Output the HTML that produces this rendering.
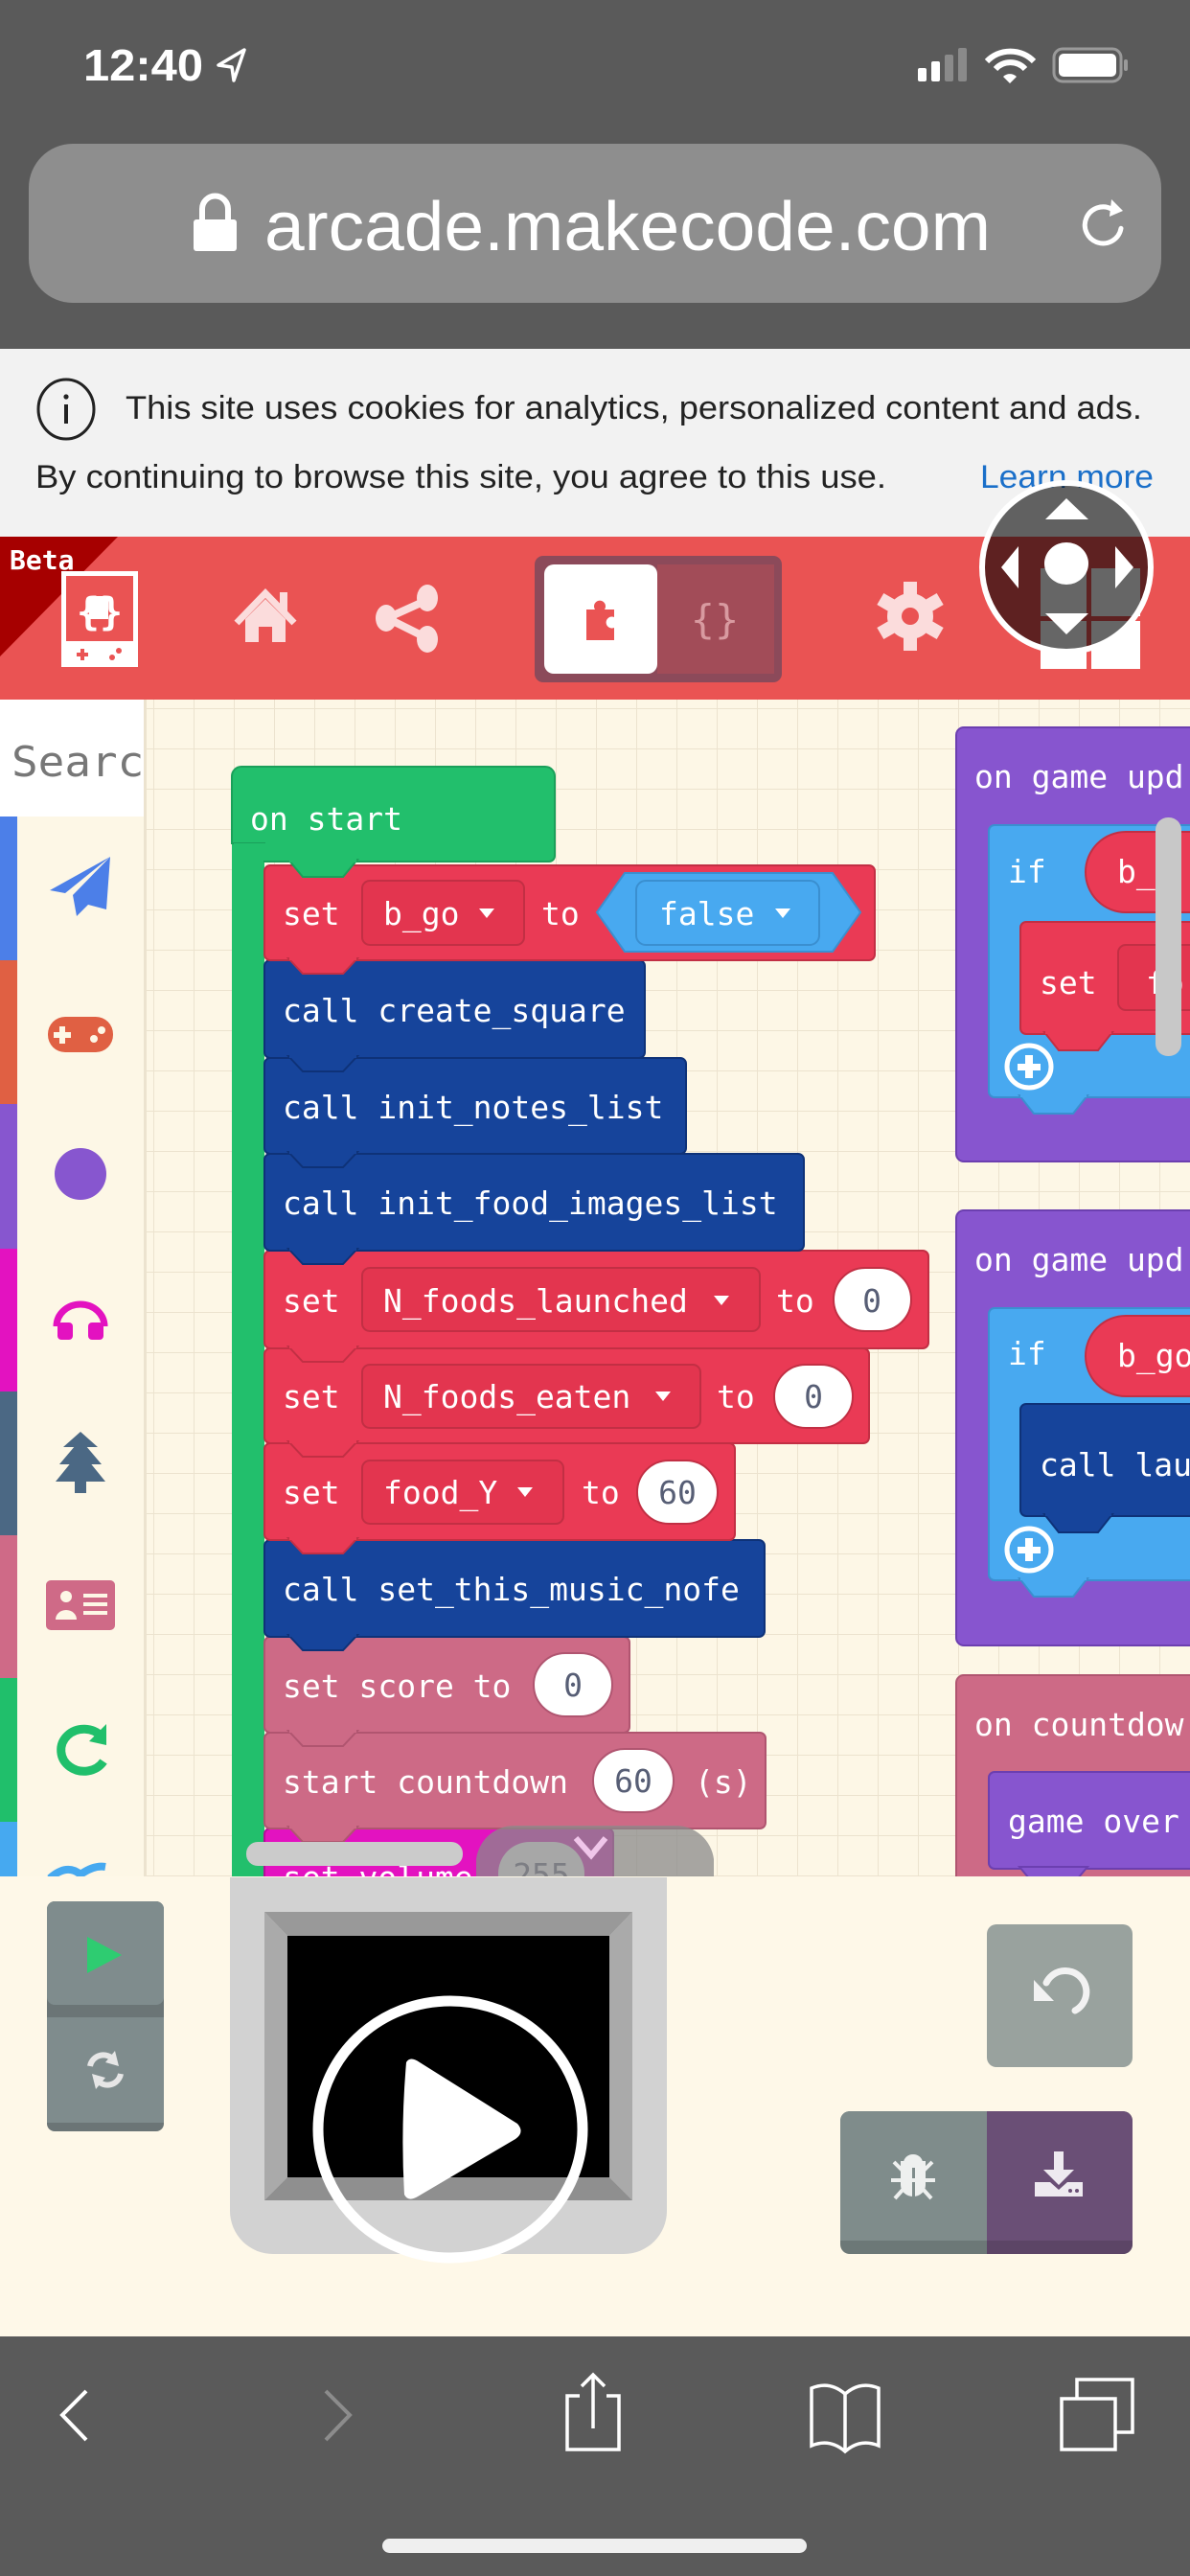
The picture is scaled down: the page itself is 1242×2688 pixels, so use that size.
<!DOCTYPE html>
<html><head><meta charset="utf-8"><style>
html,body{margin:0;padding:0;background:#5a5a5a}
svg{display:block}
.m{font-family:"DejaVu Sans Mono","Liberation Mono",monospace;font-size:33px;fill:#fff}
.s{font-family:"Liberation Sans",sans-serif}
</style></head><body>
<svg width="1242" height="2688" viewBox="0 0 1242 2688" xmlns="http://www.w3.org/2000/svg">
<defs>
<pattern id="g" x="34" y="25" width="42" height="42" patternUnits="userSpaceOnUse">
<rect width="42" height="42" fill="#fdf7e6"/>
<path d="M0 0V42M0 0H42" stroke="#ece3cf" stroke-width="2"/>
</pattern>
<clipPath id="ws"><rect x="0" y="730" width="1242" height="1228"/></clipPath>
<clipPath id="sc"><rect x="0" y="730" width="150" height="122"/></clipPath>
</defs>

<rect x="0" y="0" width="1242" height="364" fill="#5a5a5a"/>
<text x="87" y="84" class="s" font-size="46" font-weight="bold" fill="#fff" textLength="125" lengthAdjust="spacingAndGlyphs">12:40</text>
<path d="M255 52 L228 68 L242 70 L244 84 Z" fill="none" stroke="#fff" stroke-width="3.5" stroke-linejoin="round"/>
<rect x="958" y="71" width="9" height="14" rx="2" fill="#fff"/>
<rect x="972" y="64" width="9" height="21" rx="2" fill="#fff"/>
<rect x="986" y="57" width="9" height="28" rx="2" fill="#8a8a8a"/>
<rect x="1000" y="50" width="9" height="35" rx="2" fill="#8a8a8a"/>
<path d="M1030 64 A34 34 0 0 1 1079 64" fill="none" stroke="#fff" stroke-width="6"/>
<path d="M1039 72 A21 21 0 0 1 1070 72" fill="none" stroke="#fff" stroke-width="6"/>
<path d="M1047 80 L1054 87 L1061 80 A10 10 0 0 0 1047 80Z" fill="#fff"/>
<rect x="1100" y="51" width="70" height="34" rx="9" fill="none" stroke="#9a9a9a" stroke-width="3"/>
<rect x="1105" y="56" width="60" height="24" rx="5" fill="#fff"/>
<rect x="1173" y="62" width="4" height="12" rx="2" fill="#9a9a9a"/>
<rect x="30" y="150" width="1182" height="166" rx="46" fill="#8e8e8e"/>
<rect x="202" y="229" width="45" height="33" rx="3" fill="#fff"/>
<path d="M211 230 V218 a13.5 13.5 0 0 1 27 0 V230" fill="none" stroke="#fff" stroke-width="6"/>
<text x="276" y="261" class="s" font-size="72" fill="#fff" textLength="758" lengthAdjust="spacingAndGlyphs">arcade.makecode.com</text>
<path d="M1166 223 A19 19 0 1 0 1168 245" fill="none" stroke="#fff" stroke-width="5" stroke-linecap="round" transform="rotate(-20 1150 236)"/>
<path d="M1160 208 L1172 220 L1158 226 Z" fill="#fff"/>

<rect x="0" y="364" width="1242" height="196" fill="#f2f2f2"/>
<ellipse cx="69" cy="427" rx="29" ry="31" fill="none" stroke="#222" stroke-width="3"/>
<rect x="67" y="422" width="4" height="20" fill="#222"/>
<circle cx="69" cy="414" r="2.6" fill="#222"/>
<text x="131" y="437" class="s" font-size="34" fill="#222" textLength="1061" lengthAdjust="spacingAndGlyphs">This site uses cookies for analytics, personalized content and ads.</text>
<text x="37" y="509" class="s" font-size="34" fill="#222" textLength="888" lengthAdjust="spacingAndGlyphs">By continuing to browse this site, you agree to this use.</text>
<text x="1023" y="509" class="s" font-size="34" fill="#1a6fc9" textLength="181" lengthAdjust="spacingAndGlyphs">Learn more</text>

<rect x="0" y="560" width="1242" height="170" fill="#ea5353"/>
<polygon points="0,560 123,560 0,685" fill="#a60000"/>
<text x="10" y="594" font-family="DejaVu Sans Mono,monospace" font-size="28" fill="#fff" font-weight="bold">Beta</text>
<rect x="64" y="596" width="80" height="100" fill="#fff"/>
<rect x="69" y="601" width="70" height="68" fill="#ea5353"/>
<text x="104" y="652" text-anchor="middle" font-family="DejaVu Sans Mono,monospace" font-size="40" fill="#fff" font-weight="bold">{}</text>
<rect x="93" y="622" width="20" height="24" fill="#fff"/>
<rect x="80" y="681" width="12" height="4" fill="#ea5353"/><rect x="84" y="677" width="4" height="12" fill="#ea5353"/>
<circle cx="117" cy="686" r="3" fill="#ea5353"/><circle cx="124" cy="679" r="3" fill="#ea5353"/>
<path d="M247 650 L277 619 L307 650" fill="none" stroke="#fbdcdc" stroke-width="7"/>
<rect x="292" y="618" width="8" height="20" fill="#fbdcdc"/>
<path d="M256 646 L277 625 L298 646 V670 H284 V654 H270 V670 H256 Z" fill="#fbdcdc"/>
<path d="M446 626 L404 645 L446 666" fill="none" stroke="#fbdcdc" stroke-width="8"/>
<ellipse cx="446" cy="624" rx="11" ry="14" fill="#fbdcdc"/>
<ellipse cx="403" cy="645" rx="11" ry="14" fill="#fbdcdc"/>
<ellipse cx="446" cy="667" rx="11" ry="14" fill="#fbdcdc"/>
<rect x="558" y="580" width="258" height="132" rx="9" fill="#8c4a5a"/>
<rect x="686" y="589" width="122" height="114" fill="#a24c58"/>
<rect x="568" y="589" width="118" height="114" rx="10" fill="#fff"/>
<path d="M612 636 H621 a6 6 0 1 1 10 0 H641 V644 a6 6 0 1 0 0 11 V668 H612 Z" fill="#ea5353"/>
<text x="746" y="661" text-anchor="middle" font-family="DejaVu Sans Mono,monospace" font-size="42" fill="#d89aa0">{}</text>
<g transform="translate(950 643)" fill="#fbdcdc">
<circle r="24"/>
<rect x="-7" y="-36" width="14" height="72"/>
<rect x="-7" y="-36" width="14" height="72" transform="rotate(60)"/>
<rect x="-7" y="-36" width="14" height="72" transform="rotate(120)"/>
<circle r="9" fill="#ea5353"/>
</g>
<rect x="1086" y="593" width="48" height="50" fill="#fff"/>
<rect x="1139" y="593" width="51" height="50" fill="#fff"/>
<rect x="1086" y="648" width="48" height="50" fill="#fff"/>
<rect x="1139" y="648" width="51" height="50" fill="#fff"/>
<circle cx="1113" cy="592" r="88" fill="#000" fill-opacity="0.6" stroke="#fff" stroke-width="6"/>
<ellipse cx="1113" cy="588" rx="23" ry="22" fill="#fff"/>
<polygon points="1063,570 1045,592 1063,614" fill="#fff"/>
<polygon points="1164,570 1183,592 1164,614" fill="#fff"/>
<polygon points="1091,640 1136,640 1113,662" fill="#fff"/>
<polygon points="1091,542 1136,542 1113,520" fill="#fff"/>

<g clip-path="url(#ws)">
<rect x="0" y="730" width="1242" height="1228" fill="url(#g)"/>
<rect x="0" y="730" width="150" height="1228" fill="#fdf7e6"/>
<rect x="150" y="730" width="3" height="1228" fill="#ece3cf"/>
<rect x="0" y="730" width="150" height="122" fill="#fff"/>
<text x="12" y="810" font-family="DejaVu Sans Mono,monospace" font-size="44" fill="#777" clip-path="url(#sc)" textLength="166" lengthAdjust="spacingAndGlyphs">Search</text>
<rect x="0" y="852" width="18" height="150" fill="#4c7fe8"/>
<rect x="0" y="1002" width="18" height="150" fill="#e06043"/>
<rect x="0" y="1152" width="18" height="151" fill="#8756cf"/>
<rect x="0" y="1303" width="18" height="149" fill="#e312c0"/>
<rect x="0" y="1452" width="18" height="150" fill="#4b6884"/>
<rect x="0" y="1602" width="18" height="149" fill="#cf6a87"/>
<rect x="0" y="1751" width="18" height="150" fill="#20bf6b"/>
<rect x="0" y="1901" width="18" height="60" fill="#46a9f0"/>
<polygon points="115,894 52,929 68,932" fill="#4c7fe8"/>
<polygon points="115,894 76,934 80,956 92,944 111,949" fill="#4c7fe8"/>
<rect x="50" y="1061" width="68" height="37" rx="18" fill="#e06043"/>
<rect x="56" y="1077" width="18" height="6" fill="#fdf7e6"/><rect x="62" y="1071" width="6" height="18" fill="#fdf7e6"/>
<circle cx="98" cy="1084" r="4" fill="#fdf7e6"/><circle cx="106" cy="1075" r="4" fill="#fdf7e6"/>
<ellipse cx="84" cy="1225" rx="27" ry="27" fill="#8756cf"/>
<path d="M59 1384 A25 23 0 0 1 109 1384" fill="none" stroke="#e312c0" stroke-width="7"/>
<rect x="60" y="1380" width="16" height="18" rx="4" fill="#e312c0"/><rect x="92" y="1380" width="16" height="18" rx="4" fill="#e312c0"/>
<polygon points="84,1494 66,1510 102,1510" fill="#4b6884"/>
<polygon points="84,1502 62,1528 106,1528" fill="#4b6884"/>
<polygon points="84,1514 58,1546 110,1546" fill="#4b6884"/>
<rect x="78" y="1544" width="12" height="14" fill="#4b6884"/>
<rect x="48" y="1649" width="72" height="52" rx="5" fill="#cf6a87"/>
<circle cx="69" cy="1666" r="6" fill="#fdf7e6"/><path d="M58 1690 a11 10 0 0 1 22 0Z" fill="#fdf7e6"/>
<rect x="87" y="1663" width="25" height="4" fill="#fdf7e6"/><rect x="87" y="1672" width="25" height="4" fill="#fdf7e6"/><rect x="87" y="1681" width="25" height="4" fill="#fdf7e6"/>
<path d="M106 1812 A24 22 0 1 0 108 1838" fill="none" stroke="#20bf6b" stroke-width="9"/>
<polygon points="93,1817 111,1799 111,1821" fill="#20bf6b"/>
<path d="M52 1960 Q70 1944 84 1956 Q98 1946 110 1948" fill="none" stroke="#46a9f0" stroke-width="8"/>

<rect x="242" y="880" width="34" height="1100" fill="#22bf6c"/>

<rect x="276" y="1908" width="364" height="100" rx="6" fill="#e312c0" stroke="#b30e99" stroke-width="2"/>
<text x="295" y="1971" class="m">set volume</text>
<rect x="520" y="1922" width="90" height="66" rx="33" fill="#fff"/>
<text x="565" y="1968" class="m" style="fill:#575e75" text-anchor="middle">255</text>
<rect x="276" y="1808" width="523" height="100" rx="6" fill="#cd6a86" stroke="#b05570" stroke-width="2"/>
<polygon points="301,1906 316,1922 358,1922 373,1906" fill="#cd6a86" stroke="#b05570" stroke-width="2"/>
<rect x="302" y="1902" width="70" height="6" fill="#cd6a86"/>
<text x="295" y="1871" class="m">start countdown</text>
<rect x="619" y="1825" width="84" height="66" rx="33" fill="#fff" stroke="#b05570" stroke-width="2"/>
<text x="661" y="1870" class="m" style="fill:#575e75" text-anchor="middle">60</text>
<text x="725" y="1871" class="m">(s)</text>
<rect x="276" y="1708" width="381" height="100" rx="6" fill="#cd6a86" stroke="#b05570" stroke-width="2"/>
<polygon points="301,1806 316,1822 358,1822 373,1806" fill="#cd6a86" stroke="#b05570" stroke-width="2"/>
<rect x="302" y="1800" width="70" height="8" fill="#cd6a86"/>
<text x="295" y="1771" class="m">set score to</text>
<rect x="557" y="1725" width="82" height="66" rx="33" fill="#fff" stroke="#b05570" stroke-width="2"/>
<text x="598" y="1770" class="m" style="fill:#575e75" text-anchor="middle">0</text>
<rect x="276" y="1607" width="522" height="101" rx="6" fill="#16449b" stroke="#0e3278" stroke-width="2"/>
<polygon points="301,1706 316,1722 358,1722 373,1706" fill="#16449b" stroke="#0e3278" stroke-width="2"/>
<rect x="302" y="1700" width="70" height="8" fill="#16449b"/>
<text x="295" y="1670" class="m">call set_this_music_nofe</text>
<rect x="276" y="1506" width="491" height="101" rx="6" fill="#ea3a55" stroke="#c22f44" stroke-width="2"/>
<polygon points="301,1605 316,1621 358,1621 373,1605" fill="#ea3a55" stroke="#c22f44" stroke-width="2"/>
<rect x="302" y="1599" width="70" height="8" fill="#ea3a55"/>
<text x="295" y="1569" class="m">set</text>
<rect x="378" y="1524" width="210" height="66" rx="8" fill="#e3354f" stroke="#c22f44" stroke-width="2"/>
<text x="400" y="1569" class="m">food_Y</text>
<polygon points="540,1552 556,1552 548,1562" fill="#fff"/>
<text x="607" y="1569" class="m">to</text>
<rect x="665" y="1524" width="84" height="66" rx="33" fill="#fff" stroke="#c22f44" stroke-width="2"/>
<text x="707" y="1569" class="m" style="fill:#575e75" text-anchor="middle">60</text>
<rect x="276" y="1407" width="631" height="99" rx="6" fill="#ea3a55" stroke="#c22f44" stroke-width="2"/>
<polygon points="301,1504 316,1520 358,1520 373,1504" fill="#ea3a55" stroke="#c22f44" stroke-width="2"/>
<rect x="302" y="1498" width="70" height="8" fill="#ea3a55"/>
<text x="295" y="1469" class="m">set</text>
<rect x="378" y="1424" width="353" height="66" rx="8" fill="#e3354f" stroke="#c22f44" stroke-width="2"/>
<text x="400" y="1469" class="m">N_foods_eaten</text>
<polygon points="684,1452 700,1452 692,1462" fill="#fff"/>
<text x="748" y="1469" class="m">to</text>
<rect x="808" y="1424" width="82" height="66" rx="33" fill="#fff" stroke="#c22f44" stroke-width="2"/>
<text x="849" y="1469" class="m" style="fill:#575e75" text-anchor="middle">0</text>
<rect x="276" y="1305" width="693" height="102" rx="6" fill="#ea3a55" stroke="#c22f44" stroke-width="2"/>
<polygon points="301,1405 316,1421 358,1421 373,1405" fill="#ea3a55" stroke="#c22f44" stroke-width="2"/>
<rect x="302" y="1399" width="70" height="8" fill="#ea3a55"/>
<text x="295" y="1369" class="m">set</text>
<rect x="378" y="1323" width="415" height="66" rx="8" fill="#e3354f" stroke="#c22f44" stroke-width="2"/>
<text x="400" y="1369" class="m">N_foods_launched</text>
<polygon points="745,1352 761,1352 753,1362" fill="#fff"/>
<text x="810" y="1369" class="m">to</text>
<rect x="870" y="1323" width="81" height="66" rx="33" fill="#fff" stroke="#c22f44" stroke-width="2"/>
<text x="910" y="1369" class="m" style="fill:#575e75" text-anchor="middle">0</text>
<rect x="276" y="1204" width="563" height="101" rx="6" fill="#16449b" stroke="#0e3278" stroke-width="2"/>
<polygon points="301,1303 316,1319 358,1319 373,1303" fill="#16449b" stroke="#0e3278" stroke-width="2"/>
<rect x="302" y="1297" width="70" height="8" fill="#16449b"/>
<text x="295" y="1267" class="m">call init_food_images_list</text>
<rect x="276" y="1104" width="440" height="100" rx="6" fill="#16449b" stroke="#0e3278" stroke-width="2"/>
<polygon points="301,1202 316,1218 358,1218 373,1202" fill="#16449b" stroke="#0e3278" stroke-width="2"/>
<rect x="302" y="1196" width="70" height="8" fill="#16449b"/>
<text x="295" y="1167" class="m">call init_notes_list</text>
<rect x="276" y="1002" width="397" height="102" rx="6" fill="#16449b" stroke="#0e3278" stroke-width="2"/>
<polygon points="301,1102 316,1118 358,1118 373,1102" fill="#16449b" stroke="#0e3278" stroke-width="2"/>
<rect x="302" y="1096" width="70" height="8" fill="#16449b"/>
<text x="295" y="1066" class="m">call create_square</text>
<rect x="276" y="903" width="637" height="99" rx="6" fill="#ea3a55" stroke="#c22f44" stroke-width="2"/>
<polygon points="301,1000 316,1016 358,1016 373,1000" fill="#ea3a55" stroke="#c22f44" stroke-width="2"/>
<rect x="302" y="994" width="70" height="8" fill="#ea3a55"/>
<text x="295" y="965" class="m">set</text>
<rect x="378" y="919" width="169" height="67" rx="8" fill="#e3354f" stroke="#c22f44" stroke-width="2"/>
<text x="400" y="965" class="m">b_go</text>
<polygon points="500,948 516,948 508,958" fill="#fff"/>
<text x="565" y="965" class="m">to</text>
<polygon points="623,952 652,911 869,911 898,952 869,993 652,993" fill="#48a9f0" stroke="#3a8fd0" stroke-width="2"/>
<rect x="664" y="919" width="191" height="67" rx="10" fill="#48a9f0" stroke="#3a8fd0" stroke-width="2"/>
<text x="688" y="965" class="m">false</text>
<polygon points="809,948 825,948 817,958" fill="#fff"/>
<path d="M252 800 H569 a10 10 0 0 1 10 10 V893 a6 6 0 0 1 -6 6 H276 V880 H242 V810 a10 10 0 0 1 10 -10Z" fill="#22bf6c" stroke="#1aa05a" stroke-width="2"/>
<polygon points="301,897 316,915 358,915 373,897" fill="#22bf6c" stroke="#1aa05a" stroke-width="2"/>
<rect x="244" y="880" width="60" height="18" fill="#22bf6c"/>
<rect x="302" y="890" width="70" height="10" fill="#22bf6c"/>
<text x="261" y="866" class="m">on start</text>

<rect x="998" y="759" width="300" height="453" rx="8" fill="#8755cf" stroke="#6c3fb0" stroke-width="2"/>
<text x="1017" y="822" class="m">on game upd</text>
<rect x="1032" y="861" width="260" height="284" rx="6" fill="#48a9f0" stroke="#3a8fd0" stroke-width="2"/>
<polygon points="1064,1143 1079,1162 1120,1162 1135,1143" fill="#48a9f0" stroke="#3a8fd0" stroke-width="2"/>
<rect x="1065" y="1138" width="69" height="7" fill="#48a9f0"/>
<text x="1052" y="921" class="m">if</text>
<rect x="1133" y="868" width="160" height="84" rx="42" fill="#ea3a55" stroke="#c22f44" stroke-width="2"/>
<text x="1166" y="921" class="m">b_</text>
<rect x="1065" y="962" width="230" height="117" rx="6" fill="#ea3a55" stroke="#c22f44" stroke-width="2"/>
<polygon points="1090,1077 1105,1096 1146,1096 1161,1077" fill="#ea3a55" stroke="#c22f44" stroke-width="2"/>
<rect x="1091" y="1072" width="69" height="7" fill="#ea3a55"/>
<text x="1085" y="1037" class="m">set</text>
<rect x="1167" y="986" width="100" height="68" rx="8" fill="#e3354f" stroke="#c22f44" stroke-width="2"/>
<text x="1196" y="1037" class="m">fo</text>
<ellipse cx="1074" cy="1113" rx="23" ry="22" fill="none" stroke="#fff" stroke-width="5"/>
<rect x="1062" y="1110" width="24" height="7" fill="#fff"/><rect x="1070" y="1101" width="8" height="24" fill="#fff"/>
<rect x="1206" y="853" width="27" height="249" rx="13" fill="#c8c8c8"/>
<rect x="998" y="1263" width="300" height="454" rx="8" fill="#8755cf" stroke="#6c3fb0" stroke-width="2"/>
<text x="1017" y="1326" class="m">on game upd</text>
<rect x="1032" y="1365" width="260" height="284" rx="6" fill="#48a9f0" stroke="#3a8fd0" stroke-width="2"/>
<polygon points="1064,1647 1079,1666 1120,1666 1135,1647" fill="#48a9f0" stroke="#3a8fd0" stroke-width="2"/>
<rect x="1065" y="1642" width="69" height="7" fill="#48a9f0"/>
<text x="1052" y="1424" class="m">if</text>
<rect x="1133" y="1373" width="160" height="84" rx="42" fill="#ea3a55" stroke="#c22f44" stroke-width="2"/>
<text x="1166" y="1426" class="m">b_go</text>
<rect x="1065" y="1465" width="230" height="117" rx="6" fill="#16449b" stroke="#0e3278" stroke-width="2"/>
<polygon points="1090,1580 1105,1599 1146,1599 1161,1580" fill="#16449b" stroke="#0e3278" stroke-width="2"/>
<rect x="1091" y="1575" width="69" height="7" fill="#16449b"/>
<text x="1085" y="1540" class="m">call lau</text>
<ellipse cx="1074" cy="1617" rx="23" ry="22" fill="none" stroke="#fff" stroke-width="5"/>
<rect x="1062" y="1614" width="24" height="7" fill="#fff"/><rect x="1070" y="1605" width="8" height="24" fill="#fff"/>
<rect x="998" y="1748" width="300" height="300" rx="8" fill="#cd6a86" stroke="#b05570" stroke-width="2"/>
<text x="1017" y="1811" class="m">on countdow</text>
<rect x="1032" y="1849" width="260" height="101" rx="6" fill="#8755cf" stroke="#6c3fb0" stroke-width="2"/>
<polygon points="1064,1948 1079,1966 1120,1966 1135,1948" fill="#8755cf" stroke="#6c3fb0" stroke-width="2"/>
<text x="1052" y="1912" class="m">game over</text>

<rect x="257" y="1922" width="226" height="25" rx="12" fill="#cbcbcb"/>
<path d="M497 1958 V1940 a40 40 0 0 1 40 -35 H705 a40 40 0 0 1 40 35 V1958Z" fill="#8a8a8a" fill-opacity="0.75"/>
<path d="M601 1918 L617 1936 L632 1918" fill="none" stroke="#f0c6ea" stroke-width="6"/>
</g>

<rect x="0" y="1958" width="1242" height="480" fill="#fef8e8"/>
<rect x="49" y="1984" width="122" height="240" rx="8" fill="#6b7576"/>
<rect x="49" y="1984" width="122" height="108" rx="8" fill="#7f8c8d"/>
<rect x="49" y="2105" width="122" height="110" fill="#7f8c8d"/>
<rect x="49" y="2100" width="122" height="5" fill="#6b7576"/>
<polygon points="91,2021 127,2040 91,2059" fill="#2ecc71"/>
<path d="M119 2150 a14 14 0 0 0 -25 6" fill="none" stroke="#e6e6e6" stroke-width="6"/>
<polygon points="120,2140 124,2156 110,2152" fill="#e6e6e6"/>
<path d="M101 2170 a14 14 0 0 0 25 -6" fill="none" stroke="#e6e6e6" stroke-width="6"/>
<polygon points="100,2180 96,2164 110,2168" fill="#e6e6e6"/>

<path d="M240 1959 H696 V2307 a45 45 0 0 1 -45 45 H285 a45 45 0 0 1 -45 -45Z" fill="#d2d2d2"/>
<polygon points="276,1995 660,1995 636,2020 300,2020" fill="#999"/>
<polygon points="276,1995 300,2020 300,2272 276,2296" fill="#aaa"/>
<polygon points="660,1995 636,2020 636,2272 660,2296" fill="#aaa"/>
<polygon points="276,2296 300,2272 636,2272 660,2296" fill="#8f8f8f"/>
<rect x="300" y="2020" width="336" height="252" fill="#000"/>
<ellipse cx="470" cy="2222" rx="138" ry="134" fill="none" stroke="#fff" stroke-width="11"/>
<path d="M424 2152 Q418 2222 422 2290 Q426 2298 436 2292 L538 2232 Q548 2225 540 2216 L438 2152 Q428 2145 424 2152Z" fill="#fff"/>

<rect x="1030" y="2008" width="152" height="149" rx="10" fill="#99a29e"/>
<path d="M1122 2098 A22 22 0 1 0 1092 2069" fill="none" stroke="#f2f2f2" stroke-width="7" stroke-linecap="round"/>
<polygon points="1079,2066 1100,2088 1079,2088" fill="#f2f2f2"/>

<rect x="877" y="2203" width="305" height="149" rx="10" fill="#6c7877"/>
<path d="M887 2203 H1030 V2338 H877 V2213 a10 10 0 0 1 10 -10Z" fill="#7f8c8b"/>
<path d="M1030 2338 H1182 V2213 a10 10 0 0 0 -10 -10 H1030Z" fill="#6a4f76"/>
<path d="M1030 2338 H1182 V2342 a10 10 0 0 1 -10 10 H1030Z" fill="#5c4566"/>
<path d="M940 2255 h26 v25 a13 12 0 0 1 -26 0z" fill="#eef0ef"/>
<path d="M943 2257 a10 9 0 0 1 20 0z" fill="#eef0ef"/>
<rect x="952" y="2262" width="3" height="32" fill="#7f8c8b"/>
<path d="M930 2275 H976 M933 2256 L942 2265 M973 2256 L964 2265 M934 2294 L943 2284 M972 2294 L963 2284" stroke="#eef0ef" stroke-width="4"/>
<rect x="1100" y="2245" width="10" height="22" fill="#eeeaf0"/>
<polygon points="1089,2264 1121,2264 1105,2280" fill="#eeeaf0"/>
<path d="M1080 2277 H1096 L1105 2285 L1114 2277 H1130 V2292 H1080Z" fill="#eeeaf0"/>
<circle cx="1117" cy="2286" r="2" fill="#6a4f76"/><circle cx="1124" cy="2286" r="2" fill="#6a4f76"/>

<rect x="0" y="2438" width="1242" height="250" fill="#5a5a5a"/>
<path d="M90 2495 L65 2520 L90 2546" fill="none" stroke="#fff" stroke-width="4"/>
<path d="M340 2495 L365 2520 L340 2546" fill="none" stroke="#8c8c8c" stroke-width="4"/>
<path d="M605 2500 H592 V2556 H646 V2500 H633" fill="none" stroke="#fff" stroke-width="3.5"/>
<path d="M619 2534 V2478 M607 2490 L619 2478 L631 2490" fill="none" stroke="#fff" stroke-width="3.5"/>
<path d="M882 2498 Q866 2484 847 2492 V2552 Q866 2544 882 2558 Q898 2544 917 2552 V2492 Q898 2484 882 2498 V2558" fill="none" stroke="#fff" stroke-width="3.5"/>
<rect x="1108" y="2503" width="56" height="53" fill="none" stroke="#fff" stroke-width="3.5"/>
<path d="M1124 2503 V2483 H1182 V2538 H1164" fill="none" stroke="#fff" stroke-width="3.5"/>
<rect x="399" y="2649" width="443" height="15" rx="7.5" fill="#efefef"/>
</svg>
</body></html>
